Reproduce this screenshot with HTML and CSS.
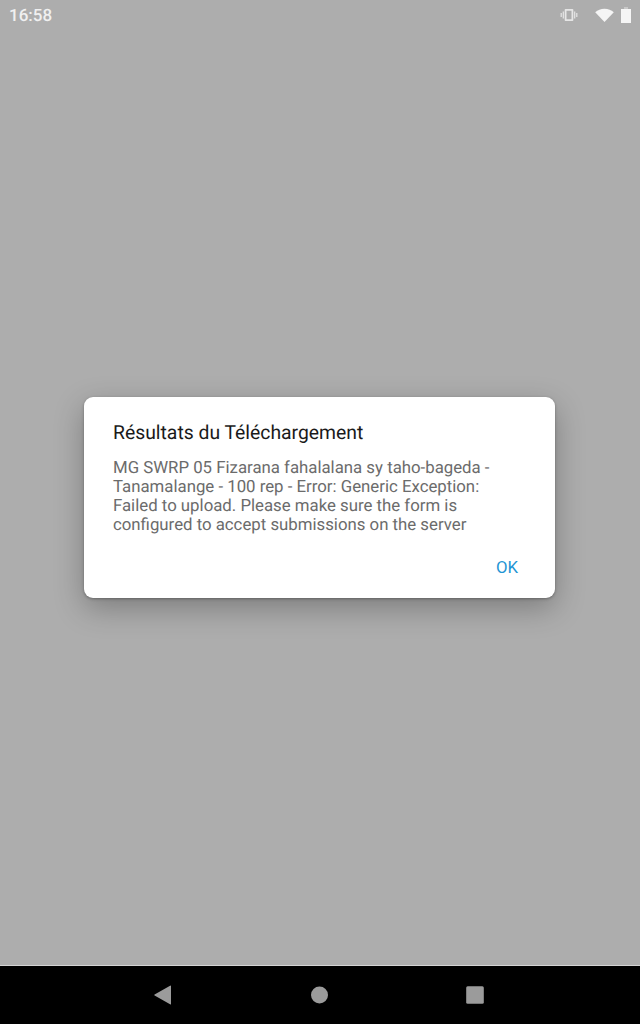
FILE: index.html
```html
<!DOCTYPE html>
<html lang="fr">
<head>
<meta charset="utf-8">
<title>Résultats du Téléchargement</title>
<link rel="stylesheet" href="styles.css">
</head>
<body>
<div class="screen">
  <header class="status">
    <span class="time">16:58</span>
    <div class="status-icons">
      <svg class="ico-vib" width="18" height="14" viewBox="0 0 18 14"><path fill="#e6e6e6" d="M5.500 1h7a.8.8 0 0 1 .8.8v10.400a.8.8 0 0 1-.8.8h-7a.8.8 0 0 1-.8-.8V1.800a.8.8 0 0 1 .8-.8zm1 1.800v8.400h5V2.800z"/><path fill="#e6e6e6" d="M2.700 3.500h1.200v7H2.700zM14.100 3.500h1.200v7h-1.200zM.6 5h1.200v4H.6zM16.200 5h1.200v4h-1.200z"/></svg>
      <svg class="ico-wifi" width="19" height="14" viewBox="0 0 19 14"><path fill="#f5f5f5" d="M.2 4.200C2.700 2 5.800.8 9.500.8s6.800 1.200 9.300 3.400L9.500 14z"/></svg>
      <svg class="ico-bat" width="10" height="16" viewBox="0 0 10 16"><path fill="#f5f5f5" d="M0 2h10v14H0z"/><path fill="#c8c8c8" d="M3 0h4v2H3z"/></svg>
    </div>
  </header>
  <main class="stage">
    <section class="dialog">
      <h1 class="title">Résultats du Téléchargement</h1>
      <p class="message">MG SWRP 05 Fizarana fahalalana sy taho-bageda - Tanamalange - 100 rep - Error: Generic Exception: Failed to upload. Please make sure the form is configured to accept submissions on the server</p>
      <div class="actions"><button class="ok">OK</button></div>
    </section>
  </main>
  <nav class="navbar">
    <svg width="18" height="20" viewBox="0 0 18 20"><path fill="#9b9b9b" d="M16.500.5a.6.6 0 0 1 .5.6v17.800a.6.6 0 0 1-.5.6L.6 10.500a.6.6 0 0 1 0-1z"/></svg>
    <svg width="18" height="18" viewBox="0 0 18 18"><circle cx="9.500" cy="9" r="8.500" fill="#9b9b9b"/></svg>
    <svg width="18" height="18" viewBox="0 0 18 18"><rect x=".2" y=".2" width="17.600" height="17.600" rx="1.500" fill="#9b9b9b"/></svg>
  </nav>
</div>
</body>
</html>
```
FILE: styles.css
```css
* { box-sizing: border-box; }
html, body { margin: 0; padding: 0; }
.screen {
  width: 640px;
  height: 1024px;
  display: flex;
  flex-direction: column;
  background: #adadad;
  font-family: Roboto, "Liberation Sans", sans-serif;
  text-rendering: geometricPrecision;
  overflow: hidden;
}
.status {
  height: 30px;
  flex: none;
  display: flex;
  align-items: center;
  justify-content: space-between;
  padding: 0 9px 0 9px;
}
.time { font-size: 17px; font-weight: 500; color: #f0f0f0; padding-top: 1px; }
.status-icons { display: flex; align-items: center; gap: 10px; }
.ico-vib { margin-right: 7px; }
.ico-wifi { margin-right: -3px; }
.stage {
  flex: 1;
  display: flex;
  align-items: center;
  justify-content: center;
  padding-right: 1px;
}
.dialog {
  width: 471px;
  height: 201px;
  background: #fff;
  border-radius: 9px;
  padding: 25px 29px 0;
  display: flex;
  flex-direction: column;
  box-shadow: 0 10px 30px rgba(0,0,0,.28), 0 1px 3px rgba(0,0,0,.3);
}
.title {
  margin: 0;
  font-size: 19.35px;
  line-height: 22px;
  font-weight: 400;
  color: #1a1a1a;
}
.message {
  margin: 14.5px 0 0;
  font-size: 16.8px;
  line-height: 19px;
  color: #6b6b6b;
}
.actions { display: flex; justify-content: flex-end; margin-top: 23.5px; }
.ok {
  border: 0;
  background: none;
  padding: 0;
  margin-right: 8px;
  font: 400 16.8px/19px Roboto, "Liberation Sans", sans-serif;
  color: #1f95d4;
}
.navbar {
  height: 59px;
  flex: none;
  background: #000;
  border-top: 1px solid #d4d4d4;
  display: flex;
  align-items: center;
  justify-content: center;
  gap: 138px;
  padding-right: 3px;
}
```
